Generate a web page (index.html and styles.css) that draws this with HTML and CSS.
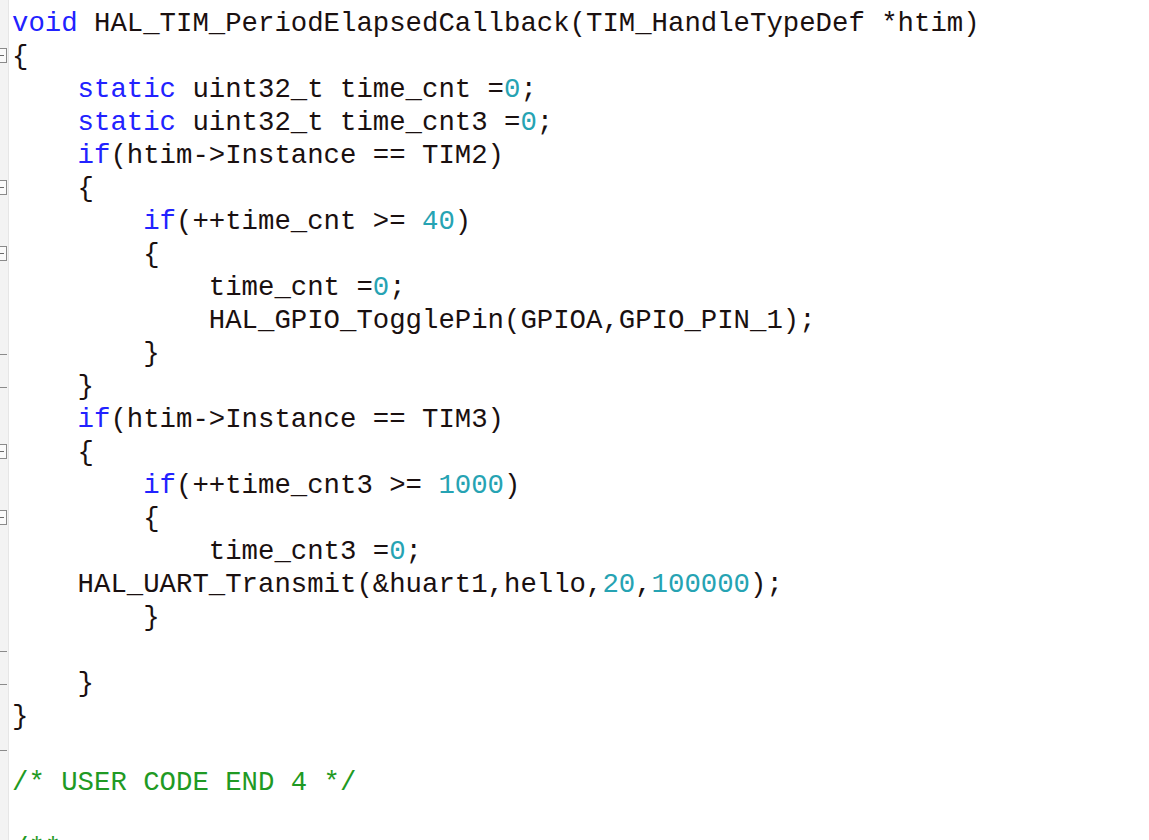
FILE: index.html
```html
<!DOCTYPE html>
<html>
<head>
<meta charset="utf-8">
<link rel="stylesheet" href="styles.css">
</head>
<body>
<div class="editor">
  <div class="line"><span class="gut"></span><span class="code"><span class="cm">/* USER CODE BEGIN 4 */</span></span></div>
  <div class="line"><span class="gut"></span><span class="code"><span class="kw">void</span> HAL_TIM_PeriodElapsedCallback(TIM_HandleTypeDef *htim)</span></div>
  <div class="line"><span class="gut"><span class="fold"></span></span><span class="code">{</span></div>
  <div class="line"><span class="gut"></span><span class="code">    <span class="kw">static</span> uint32_t time_cnt =<span class="num">0</span>;</span></div>
  <div class="line"><span class="gut"></span><span class="code">    <span class="kw">static</span> uint32_t time_cnt3 =<span class="num">0</span>;</span></div>
  <div class="line"><span class="gut"></span><span class="code">    <span class="kw">if</span>(htim-&gt;Instance == TIM2)</span></div>
  <div class="line"><span class="gut"><span class="fold"></span></span><span class="code">    {</span></div>
  <div class="line"><span class="gut"></span><span class="code">        <span class="kw">if</span>(++time_cnt &gt;= <span class="num">40</span>)</span></div>
  <div class="line"><span class="gut"><span class="fold"></span></span><span class="code">        {</span></div>
  <div class="line"><span class="gut"></span><span class="code">            time_cnt =<span class="num">0</span>;</span></div>
  <div class="line"><span class="gut"></span><span class="code">            HAL_GPIO_TogglePin(GPIOA,GPIO_PIN_1);</span></div>
  <div class="line"><span class="gut"><span class="end"></span></span><span class="code">        }</span></div>
  <div class="line"><span class="gut"><span class="end"></span></span><span class="code">    }</span></div>
  <div class="line"><span class="gut"></span><span class="code">    <span class="kw">if</span>(htim-&gt;Instance == TIM3)</span></div>
  <div class="line"><span class="gut"><span class="fold"></span></span><span class="code">    {</span></div>
  <div class="line"><span class="gut"></span><span class="code">        <span class="kw">if</span>(++time_cnt3 &gt;= <span class="num">1000</span>)</span></div>
  <div class="line"><span class="gut"><span class="fold"></span></span><span class="code">        {</span></div>
  <div class="line"><span class="gut"></span><span class="code">            time_cnt3 =<span class="num">0</span>;</span></div>
  <div class="line"><span class="gut"></span><span class="code">    HAL_UART_Transmit(&amp;huart1,hello,<span class="num">20</span>,<span class="num">100000</span>);</span></div>
  <div class="line"><span class="gut"></span><span class="code">        }</span></div>
  <div class="line"><span class="gut"><span class="end"></span></span><span class="code"></span></div>
  <div class="line"><span class="gut"><span class="end"></span></span><span class="code">    }</span></div>
  <div class="line"><span class="gut"></span><span class="code">}</span></div>
  <div class="line"><span class="gut"><span class="end"></span></span><span class="code"></span></div>
  <div class="line"><span class="gut"></span><span class="code"><span class="cm">/* USER CODE END 4 */</span></span></div>
  <div class="line"><span class="gut"></span><span class="code"></span></div>
  <div class="line"><span class="gut"></span><span class="code"><span class="cm">/**</span></span></div>
</div>
</body>
</html>
```

FILE: styles.css
```css
html, body {
  margin: 0;
  padding: 0;
  background: #ffffff;
  overflow: hidden;
  height: 840px;
}

.editor {
  margin-top: -26px;
  font-family: "Liberation Mono", "Courier New", monospace;
  font-size: 27.33px;
  color: #1a1010;
}

.line {
  display: flex;
  height: 33px;
  align-items: stretch;
}

.gut {
  position: relative;
  flex: 0 0 8px;
  width: 8px;
  background: #f3f3f3;
  border-right: 1px solid #e6e6e6;
}

.code {
  white-space: pre;
  line-height: 33px;
  padding-left: 3px;
}

.kw { color: #2222ff; }
.num { color: #26a3b3; }
.cm { color: #1f9a24; }

.fold {
  position: absolute;
  left: -8px;
  top: 8px;
  width: 13px;
  height: 13px;
  border: 1px solid #8a8a8a;
  background: #fafafa;
}

.fold::after {
  content: "";
  position: absolute;
  left: 3px;
  right: 2px;
  top: 6px;
  height: 1px;
  background: #6a6a6a;
}

.end {
  position: absolute;
  left: 0;
  top: 17px;
  width: 7px;
  height: 1px;
  background: #8a8a8a;
}
```
